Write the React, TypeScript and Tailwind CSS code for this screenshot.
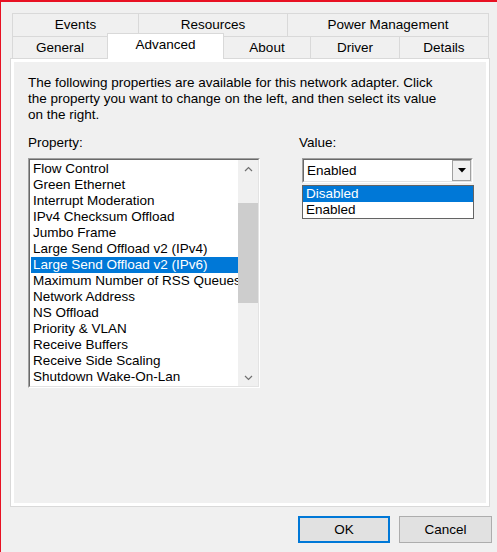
import React from 'react';

const properties = [
  'Flow Control',
  'Green Ethernet',
  'Interrupt Moderation',
  'IPv4 Checksum Offload',
  'Jumbo Frame',
  'Large Send Offload v2 (IPv4)',
  'Large Send Offload v2 (IPv6)',
  'Maximum Number of RSS Queues',
  'Network Address',
  'NS Offload',
  'Priority & VLAN',
  'Receive Buffers',
  'Receive Side Scaling',
  'Shutdown Wake-On-Lan',
];

const selectedProperty = 'Large Send Offload v2 (IPv6)';

const Chevron = ({ up }: { up?: boolean }) => (
  <svg width="9" height="6" viewBox="0 0 9 6" className="block">
    <polyline
      points={up ? '1,5 4.5,1.5 8,5' : '1,1 4.5,4.5 8,1'}
      fill="none"
      stroke="#707070"
      strokeWidth="1.2"
    />
  </svg>
);

const TopTab = ({ label, className }: { label: string; className: string }) => (
  <div className={`flex items-center justify-center border-t border-l border-[#d9d9d9] bg-[#f0f0f0] ${className}`}>
    {label}
  </div>
);

const App = () => {
  return (
    <div className="w-[497px] h-[552px] overflow-hidden bg-[#f0f0f0] border-t-2 border-l border-[#e81123] font-['Liberation_Sans',Arial,sans-serif] text-[13.5px] leading-[16px] text-black flex flex-col">
      {/* tab strip, two rows */}
      <div className="mt-[11px] ml-[11px] w-[477px]">
        <div className="flex h-[23px]">
          <TopTab label="Events" className="w-[126px]" />
          <TopTab label="Resources" className="w-[149px]" />
          <TopTab label="Power Management" className="flex-1 border-r" />
        </div>
        <div className="flex h-[22px] items-end">
          <TopTab label="General" className="w-[95px] h-full" />
          <div className="relative z-10 -mb-px flex h-[26px] w-[117px] justify-center border-t border-x border-[#d9d9d9] bg-white pt-[3px]">
            Advanced
          </div>
          <div className="flex h-full w-[86px] items-center justify-center border-t border-[#d9d9d9]">About</div>
          <TopTab label="Driver" className="w-[89px] h-full" />
          <TopTab label="Details" className="flex-1 h-full border-r" />
        </div>
      </div>

      {/* tab page */}
      <div className="ml-[9px] h-[449px] w-[480px] border border-[#d9d9d9] bg-white p-[3px]">
        <div className="h-full bg-[#f0f0f0] pl-[14px] pt-[13px]">
          <p>
            The following properties are available for this network adapter. Click
            <br />
            the property you want to change on the left, and then select its value
            <br />
            on the right.
          </p>

          <div className="mt-[12px] flex">
            <div className="w-[232px]">
              <div>Property:</div>
              <div className="mt-[7px] h-[230px] border border-t-[#a0a0a0] border-l-[#a0a0a0] border-b-white border-r-white">
                <div className="flex h-full border border-t-[#696969] border-l-[#696969] border-b-[#e3e3e3] border-r-[#e3e3e3] bg-white">
                  <ul className="flex-1 overflow-hidden pl-px pt-px">
                    {properties.map((p) => (
                      <li
                        key={p}
                        className={`h-[16px] whitespace-nowrap pl-[2px] ${
                          p === selectedProperty ? 'bg-[#0078d7] text-white' : ''
                        }`}
                      >
                        {p}
                      </li>
                    ))}
                  </ul>
                  <div className="flex w-[20px] flex-col bg-[#f0f0f0]">
                    <div className="flex h-[17px] items-center justify-center">
                      <Chevron up />
                    </div>
                    <div className="flex-1">
                      <div className="mt-[26px] h-[100px] bg-[#cdcdcd]" />
                    </div>
                    <div className="flex h-[17px] items-center justify-center">
                      <Chevron />
                    </div>
                  </div>
                </div>
              </div>
            </div>

            <div className="ml-[39px]">
              <div>Value:</div>
              <div className="ml-[3px] mt-[7px] h-[25px] w-[171px] border border-t-[#a0a0a0] border-l-[#a0a0a0] border-b-white border-r-white">
                <div className="flex h-full items-center border border-t-[#696969] border-l-[#696969] border-b-[#e3e3e3] border-r-[#e3e3e3] bg-white">
                  <span className="flex-1 pl-[3px]">Enabled</span>
                  <div className="flex h-full w-[19px] items-center justify-center border border-[#a0a0a0] bg-[#f0f0f0]">
                    <svg width="8" height="5" viewBox="0 0 8 5" className="block">
                      <polygon points="0,0 8,0 4,4.5" fill="#000" />
                    </svg>
                  </div>
                </div>
              </div>
              {/* open dropdown */}
              <div className="ml-[3px] mt-[2px] w-[172px] border border-[#646464] bg-white">
                <div className="h-[16px] bg-[#0078d7] pl-[3px] text-white">Disabled</div>
                <div className="h-[16px] pl-[3px]">Enabled</div>
              </div>
            </div>
          </div>
        </div>
      </div>

      {/* dialog buttons */}
      <div className="mt-[9px] flex justify-end gap-[9px] pr-[5px]">
        <button className="h-[27px] w-[92px] border-2 border-[#0078d7] bg-[#e1e1e1]">OK</button>
        <button className="h-[27px] w-[93px] border border-[#adadad] bg-[#e1e1e1]">Cancel</button>
      </div>
    </div>
  );
};

export default App;
